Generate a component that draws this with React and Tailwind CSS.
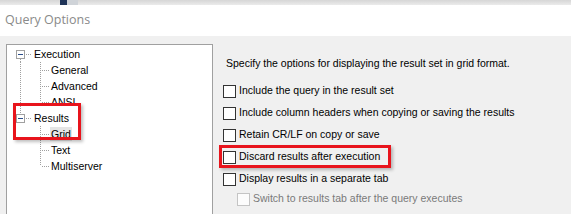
import React from "react";

const font = { fontFamily: '"Liberation Sans", Arial, sans-serif' };

// row connector drawings for the tree
const Gutter = ({ root, rootLine, childLine, childEnd, expanded }) => {
    const w = root ? 26 : 43;
    return (
        <svg width={w} height="16" className="shrink-0" shapeRendering="crispEdges">
            {rootLine === "full" && <line x1="13.5" y1="0" x2="13.5" y2="16" stroke="#a0a0a0" strokeDasharray="1 1" />}
            {rootLine === "down" && <line x1="13.5" y1="13" x2="13.5" y2="16" stroke="#a0a0a0" strokeDasharray="1 1" />}
            {rootLine === "up" && <line x1="13.5" y1="0" x2="13.5" y2="4" stroke="#a0a0a0" strokeDasharray="1 1" />}
            {childLine && (
                <line x1="33.5" y1="0" x2="33.5" y2={childEnd ? 8 : 16} stroke="#a0a0a0" strokeDasharray="1 1" />
            )}
            {root ? (
                <>
                    <rect x="9.5" y="4.5" width="8" height="8" fill="#fff" stroke="#a0a0a0" />
                    {expanded && <line x1="11" y1="8.5" x2="16" y2="8.5" stroke="#2a4d8a" />}
                    <line x1="19" y1="8.5" x2="25" y2="8.5" stroke="#a0a0a0" strokeDasharray="1 1" />
                </>
            ) : (
                <line x1="35" y1="8.5" x2="42" y2="8.5" stroke="#a0a0a0" strokeDasharray="1 1" />
            )}
        </svg>
    );
};

const TreeRow = ({ label, selected, ...g }) => (
    <div className="flex items-center h-4">
        <Gutter {...g} />
        <span className={`px-px leading-[14px] text-black ${selected ? "bg-[#e5e5e5]" : ""}`}>{label}</span>
    </div>
);

const CheckRow = ({ label, disabled, indent, h = "h-[22px]", children }) => (
    <div className={`relative flex items-center ${h} ${indent ? "pl-[14px]" : ""}`}>
        <span
            className={`w-[13px] h-[13px] border shrink-0 ${disabled ? "border-[#c4c4c4] bg-[#fcfcfc]" : "border-[#333333] bg-white"}`}
        />
        <span className={`ml-[3px] ${disabled ? "text-[#7a7a7a]" : "text-black"}`}>{label}</span>
        {children}
    </div>
);

export default function App() {
    return (
        <div className="w-[571px] h-[214px] overflow-hidden bg-[#f0f0f0] flex flex-col text-[10.5px]" style={font}>
            <div className="h-[5px] shrink-0 flex bg-gradient-to-b from-[#d6d6d6] to-[#ebebeb]">
                <div className="ml-[60px] w-[7px] bg-[#1f3458]" />
                <div className="w-[11px] bg-[#cfd3d8]" />
            </div>
            <div className="h-[31px] shrink-0 bg-white flex items-center pl-[5px]">
                <span className="text-[12.5px] text-[#8a8a8a]" style={{ fontFamily: '"Open Sans", "Noto Sans", sans-serif' }}>
                    Query Options
                </span>
            </div>
            <div className="flex flex-1">
                <div className="relative ml-[6px] mt-[8px] w-[207px] h-[200px] bg-white border border-[#a0a0a0] pt-px shrink-0">
                    <TreeRow label="Execution" root expanded rootLine="down" />
                    <TreeRow label="General" rootLine="full" childLine />
                    <TreeRow label="Advanced" rootLine="full" childLine />
                    <TreeRow label="ANSI" rootLine="full" childLine childEnd />
                    <TreeRow label="Results" root expanded rootLine="up" />
                    <TreeRow label="Grid" childLine selected />
                    <TreeRow label="Text" childLine />
                    <TreeRow label="Multiserver" childLine childEnd />
                    <div className="absolute left-[6px] top-[58px] w-[68px] h-[37px] border-[3px] border-[#e8141c] shadow-[2px_2px_3px_rgba(0,0,0,0.25)]" />
                </div>
                <div className="flex flex-col pl-[10px]">
                    <div className="mt-[20px] ml-[3px] h-[14px] leading-[14px] text-black">
                        Specify the options for displaying the result set in grid format.
                    </div>
                    <div className="mt-[10px] flex flex-col">
                        <CheckRow label="Include the query in the result set" />
                        <CheckRow label="Include column headers when copying or saving the results" />
                        <CheckRow label="Retain CR/LF on copy or save" />
                        <CheckRow label="Discard results after execution">
                            <div className="absolute -left-[4px] -top-px w-[172px] h-[23px] border-[3px] border-[#e8141c] shadow-[2px_2px_3px_rgba(0,0,0,0.25)]" />
                        </CheckRow>
                        <CheckRow label="Display results in a separate tab" />
                        <CheckRow label="Switch to results tab after the query executes" disabled indent h="h-[18px]" />
                    </div>
                </div>
            </div>
        </div>
    );
}
